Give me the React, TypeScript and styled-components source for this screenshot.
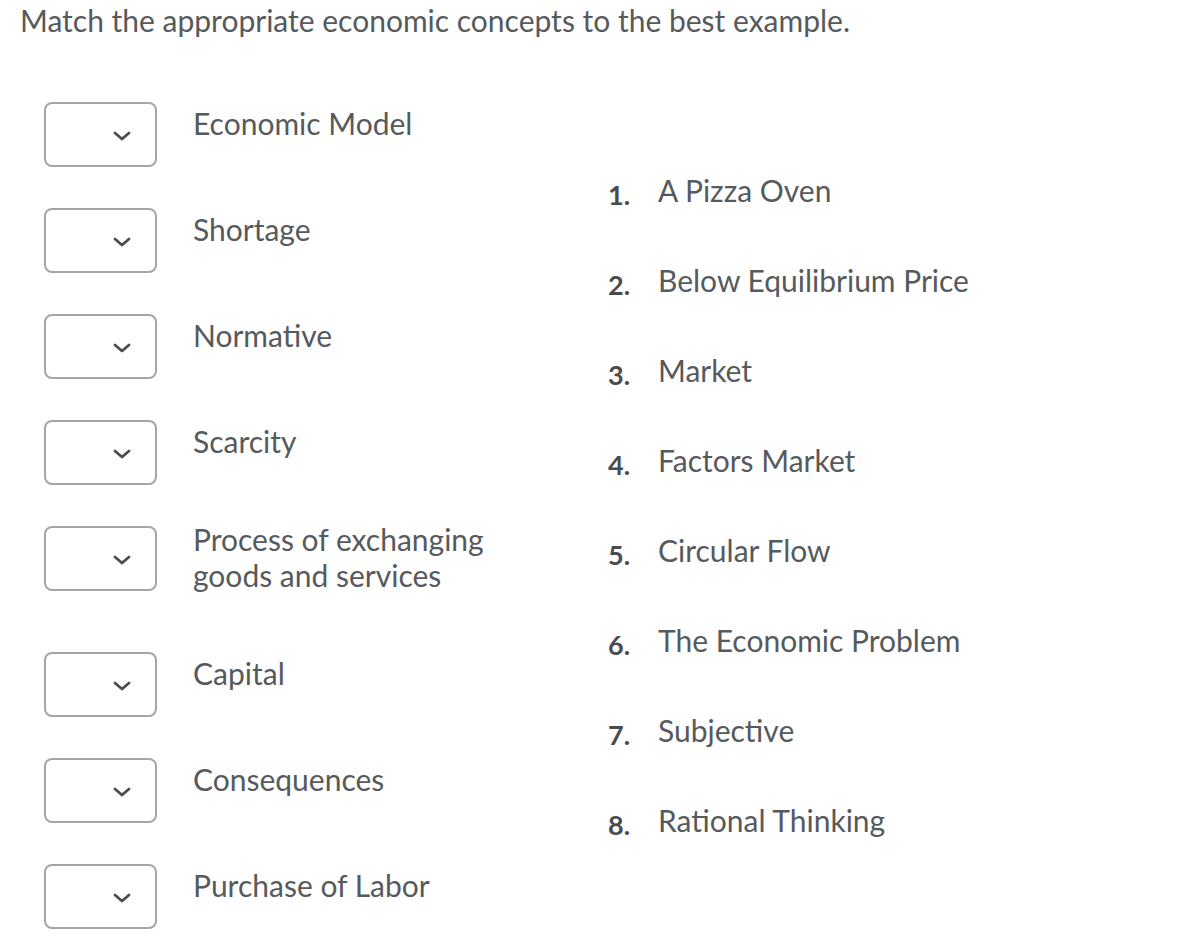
import React from "react";
import styled, { createGlobalStyle } from "styled-components";

const GlobalStyle = createGlobalStyle`
    html, body {
        margin: 0;
        padding: 0;
        background: #ffffff;
    }
    body {
        font-family: Lato, "Open Sans", "Liberation Sans", sans-serif;
        color: #565a5c;
    }
`;

const PageStyled = styled.div`
    padding: 2px 20px 0 20px;
`;

const TitleStyled = styled.div`
    font-size: 30px;
    line-height: 36px;
    color: #565a5c;
`;

const MatchGridStyled = styled.div`
    display: grid;
    grid-template-columns: 564px 1fr;
    margin: 64px 0 0 24px;
`;

const ChoiceListStyled = styled.div`
    display: flex;
    flex-direction: column;
    gap: 41px;
`;

const ChoiceRowStyled = styled.div`
    display: flex;
    align-items: flex-start;
    gap: 36px;
`;

const SelectStyled = styled.div`
    flex: none;
    box-sizing: border-box;
    width: 113px;
    height: 65px;
    border: 2px solid #a3a6a8;
    border-radius: 8px;
    background: #ffffff;
    display: flex;
    align-items: center;
    justify-content: flex-end;
    padding: 2px 24px 0 0;
`;

const LabelStyled = styled.div<{ $multiline?: boolean }>`
    width: 340px;
    font-size: 30px;
    line-height: 36px;
    color: #565a5c;
    margin: ${(props) => (props.$multiline ? "-5px 0 18px 0" : "3px 0 0 0")};
`;

const AnswerListStyled = styled.ol`
    list-style: none;
    margin: 0;
    padding: 70px 0 0 0;
    display: flex;
    flex-direction: column;
    gap: 54px;
`;

const AnswerStyled = styled.li`
    display: flex;
    align-items: flex-start;
    font-size: 30px;
    line-height: 36px;
    color: #565a5c;
    white-space: nowrap;
`;

const NumberStyled = styled.span`
    flex: none;
    width: 50px;
    font-weight: 700;
    font-size: 27px;
    color: #494c4e;
    margin: 5px 0 -5px 0;
`;

const choices = [
    { label: "Economic Model" },
    { label: "Shortage" },
    { label: "Normative" },
    { label: "Scarcity" },
    { label: "Process of exchanging goods and services", multiline: true },
    { label: "Capital" },
    { label: "Consequences" },
    { label: "Purchase of Labor" },
];

const answers = [
    "A Pizza Oven",
    "Below Equilibrium Price",
    "Market",
    "Factors Market",
    "Circular Flow",
    "The Economic Problem",
    "Subjective",
    "Rational Thinking",
];

function Chevron() {
    return (
        <svg width="18" height="10" viewBox="0 0 18 10" fill="none">
            <path
                d="M2 2 L9 8 L16 2"
                stroke="#4a4d4f"
                strokeWidth="2.8"
                strokeLinecap="round"
                strokeLinejoin="round"
            />
        </svg>
    );
}

export default function App() {
    return (
        <>
            <GlobalStyle />
            <PageStyled>
                <TitleStyled>
                    Match the appropriate economic concepts to the best example.
                </TitleStyled>

                <MatchGridStyled>
                    {/* Choices with dropdowns */}
                    <ChoiceListStyled>
                        {choices.map((item, index) => (
                            <ChoiceRowStyled key={index}>
                                <SelectStyled>
                                    <Chevron />
                                </SelectStyled>
                                <LabelStyled $multiline={item.multiline}>
                                    {item.label}
                                </LabelStyled>
                            </ChoiceRowStyled>
                        ))}
                    </ChoiceListStyled>

                    {/* Numbered answers */}
                    <AnswerListStyled>
                        {answers.map((text, index) => (
                            <AnswerStyled key={index}>
                                <NumberStyled>{index + 1}.</NumberStyled>
                                <span>{text}</span>
                            </AnswerStyled>
                        ))}
                    </AnswerListStyled>
                </MatchGridStyled>
            </PageStyled>
        </>
    );
}
